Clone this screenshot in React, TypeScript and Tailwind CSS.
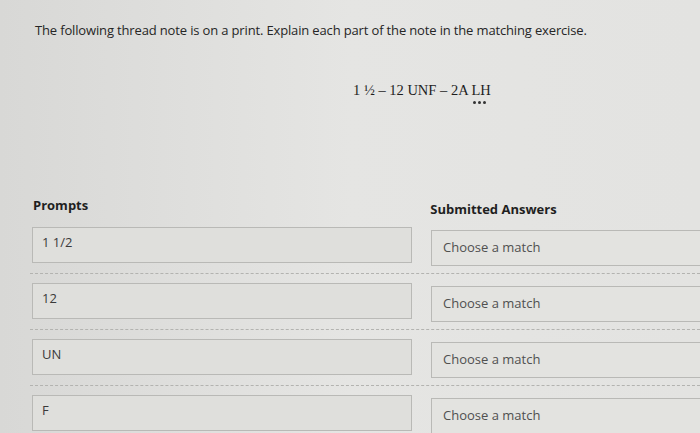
const prompts = ['1 1/2', '12', 'UN', 'F']

function Row({ label, last }: { label: string; last?: boolean }) {
  return (
    <div>
      <div className="flex items-start">
        <div className="ml-[32px] mt-[1px] w-[380px] h-[36px] shrink-0 border border-[#b9b9b6] bg-[#dfdfdc] flex items-center pl-[9px] pb-[3px] text-[13px] text-[#3a3a3a]">
          {label}
        </div>
        <div className="ml-[19px] mt-[4px] w-[290px] h-[36px] shrink-0 border border-[#b9b9b6] bg-[#e3e3e0] flex items-center pl-[11px] text-[13px] text-[#505050]">
          Choose a match
        </div>
      </div>
      {!last && <div className="ml-[30px] mt-[7px] mb-[8px] border-t border-dashed border-[#b3b3b0]" />}
    </div>
  )
}

export default function App() {
  return (
    <div
      className="w-[700px] h-[433px] overflow-hidden bg-gradient-to-r from-[#d8d8d6] via-[#e5e5e3] to-[#e3e3e1]"
      style={{ fontFamily: '"Open Sans", sans-serif' }}
    >
      <p className="pt-[21px] pl-[35px] text-[13px] leading-[18px] tracking-[-0.15px] text-[#262626]">
        The following thread note is on a print. Explain each part of the note in the matching exercise.
      </p>

      <div className="mt-[43px] pl-[353px] text-[14.5px] leading-[16px] text-[#1e1e1e]" style={{ fontFamily: '"Liberation Serif", serif' }}>
        <span>1 ½ – 12 UNF – 2A </span>
        <span className="relative inline-block">
          LH
          <span className="absolute left-[2px] top-[19px] flex gap-[2px]">
            <span className="w-[3px] h-[3px] rounded-full bg-[#333]" />
            <span className="w-[3px] h-[3px] rounded-full bg-[#333]" />
            <span className="w-[3px] h-[3px] rounded-full bg-[#333]" />
          </span>
        </span>
      </div>

      <div className="mt-[98px] flex text-[13px] font-bold text-[#1f1f1f]">
        <span className="ml-[33px]">Prompts</span>
        <span className="ml-[342px] mt-[4px]">Submitted Answers</span>
      </div>

      <div className="mt-[6px]">
        {prompts.map((p, i) => (
          <Row key={p} label={p} last={i === prompts.length - 1} />
        ))}
      </div>
    </div>
  )
}
